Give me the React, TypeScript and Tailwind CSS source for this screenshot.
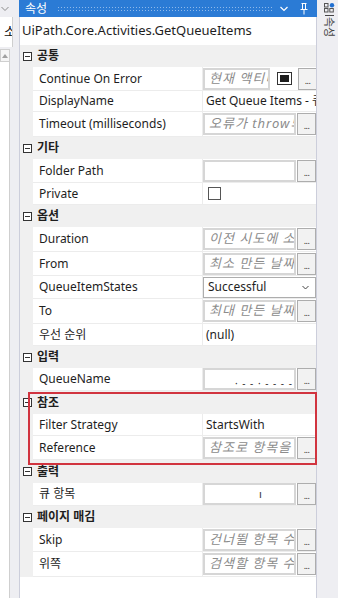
import React from 'react';

const FONT = "font-['Noto_Sans','Noto_Sans_CJK_KR',sans-serif]";

function Toggle() {
  return (
    <div className="w-[9px] h-[9px] border border-[#333] bg-white flex items-center justify-center">
      <div className="w-[5px] h-px bg-[#333]" />
    </div>
  );
}

function Category({ label, h = 22 }: { label: string; h?: number }) {
  return (
    <div className="flex items-center bg-[#f0f0f0]" style={{ height: h }}>
      <div className="ml-[3px]">
        <Toggle />
      </div>
      <span className="ml-[5px] text-[12px] font-bold text-[#1e1e1e]">{label}</span>
    </div>
  );
}

function DotsButton() {
  return (
    <div className="w-[19px] h-[22px] ml-px shrink-0 border border-[#adadad] bg-[#f2f2f2] flex items-end justify-center pb-[4px]">
      <span className="text-[9px] leading-none text-[#333] tracking-[-0.5px]">...</span>
    </div>
  );
}

function TextBox({ placeholder, w = 93, children }: { placeholder?: string; w?: number; children?: React.ReactNode }) {
  return (
    <div
      className="h-[22px] shrink-0 border-2 border-[#d6d6d6] bg-white flex items-center pl-[4px] overflow-hidden whitespace-nowrap"
      style={{ width: w }}
    >
      {placeholder ? (
        <span className="min-w-0 overflow-hidden whitespace-nowrap italic text-[13px] tracking-[1px] text-[#8c8c8c]">
          {placeholder}
        </span>
      ) : (
        children
      )}
    </div>
  );
}

function Row({ name, h, children }: { name: string; h: number; children?: React.ReactNode }) {
  return (
    <div className="flex bg-[#f0f0f0]" style={{ height: h }}>
      <div className="w-[13px] shrink-0" />
      <div className="flex flex-1 min-w-0 bg-white border-b border-[#ececec]">
        <div className="w-[170px] shrink-0 border-r border-[#ececec] flex items-center pl-[6px] text-[12px] text-[#1e1e1e] whitespace-nowrap overflow-hidden">
          {name}
        </div>
        <div className="flex-1 min-w-0 flex items-center overflow-hidden whitespace-nowrap text-[12px] text-[#1e1e1e]">
          {children}
        </div>
      </div>
    </div>
  );
}

function Pin() {
  return (
    <svg width="8" height="12" viewBox="0 0 8 12" fill="none" stroke="white" strokeWidth="1">
      <path d="M1.5 0.5h5M2.5 0.5v6M5.5 0.5v6M0.5 6.5h7M4 6.5v5" />
    </svg>
  );
}

export default function App() {
  return (
    <div className={`w-[338px] h-[598px] flex bg-[#eeeef2] overflow-hidden relative ${FONT}`}>
      {/* 왼쪽 패널 조각 */}
      <div className="w-[19px] shrink-0 flex flex-col">
        <div className="h-[17px] flex items-center pl-[1px]">
          <svg width="8" height="6" viewBox="0 0 8 6" fill="none" stroke="#8a8a8a" strokeWidth="1">
            <path d="M0.5 1l3.5 3.5 3.5-3.5" />
          </svg>
        </div>
        <div className="w-[13px] h-[30px] bg-white border-r border-[#cfcfcf] flex items-center justify-end overflow-hidden">
          <span className="text-[13px] text-[#111] -mr-[4px]">소</span>
        </div>
        <div className="flex-1 flex flex-col w-[10px] mt-[2px]">
          <div className="h-[13px] border border-[#cfcfcf] bg-[#f5f5f5] flex items-center justify-center">
            <svg width="6" height="4" viewBox="0 0 6 4"><path d="M0 4L3 0l3 4z" fill="#a0a0a0" /></svg>
          </div>
          <div className="flex-1 bg-white border-r border-[#cfcfcf]" />
        </div>
      </div>

      {/* 속성 패널 */}
      <div className="w-[298px] shrink-0 flex flex-col">
        <div className="h-[17px] bg-[#2b7bd5] flex items-center px-[6px]">
          <span className="text-[12px] text-white leading-none">속성</span>
          <div className="flex-1 h-[5px] ml-[10px] mr-[8px] bg-[radial-gradient(circle,#8fb9ea_0.6px,transparent_0.8px)] bg-[length:3px_3px]" />
          <svg width="8" height="6" viewBox="0 0 8 6" fill="none" stroke="white" strokeWidth="1.2" className="mr-[12px]">
            <path d="M0.5 1l3.5 3.5 3.5-3.5" />
          </svg>
          <Pin />
          <div className="w-[3px]" />
        </div>
        <div className="flex-1 flex flex-col bg-white border-l border-r border-[#cccedb]">
          <div className="h-[28px] pt-[4px] pl-[2px] text-[13px] leading-[18px] text-[#1e1e1e]">UiPath.Core.Activities.GetQueueItems</div>

          <Category label="공통" />
          <Row name="Continue On Error" h={24}>
            <TextBox w={67} placeholder="현재 액티비티가 실패해도" />
            <div className="w-[15px] h-[13px] ml-[7px] mr-[5px] shrink-0 border border-[#333] bg-white flex items-center justify-center">
              <div className="w-[9px] h-[7px] bg-[#1e1e1e]" />
            </div>
            <DotsButton />
          </Row>
          <Row name="DisplayName" h={21}>
            <span className="pl-[3px]">Get Queue Items - 큐 항목 가져오기</span>
          </Row>
          <Row name="Timeout (milliseconds)" h={25}>
            <TextBox placeholder="오류가 throw되기 전에" />
            <DotsButton />
          </Row>

          <Category label="기타" />
          <Row name="Folder Path" h={24}>
            <TextBox />
            <DotsButton />
          </Row>
          <Row name="Private" h={22}>
            <div className="w-[13px] h-[13px] ml-[5px] border border-[#555] bg-white" />
          </Row>

          <Category label="옵션" />
          <Row name="Duration" h={25}>
            <TextBox placeholder="이전 시도에 소요된 시간" />
            <DotsButton />
          </Row>
          <Row name="From" h={24}>
            <TextBox placeholder="최소 만든 날짜" />
            <DotsButton />
          </Row>
          <Row name="QueueItemStates" h={23}>
            <div className="w-[113px] h-[21px] border border-[#adadad] bg-white flex items-center pl-[4px] pr-[6px]">
              <span className="flex-1 text-[12px]">Successful</span>
              <svg width="7" height="5" viewBox="0 0 7 5" fill="none" stroke="#444" strokeWidth="1">
                <path d="M0.5 1l3 3 3-3" />
              </svg>
            </div>
          </Row>
          <Row name="To" h={25}>
            <TextBox placeholder="최대 만든 날짜" />
            <DotsButton />
          </Row>
          <Row name="우선 순위" h={22}>
            <span className="pl-[3px]">(null)</span>
          </Row>

          <Category label="입력" />
          <Row name="QueueName" h={23}>
            <TextBox>
              <span className="text-[10px] text-[#333] tracking-[1px] pl-[26px] mt-[8px]">· - - · - - - - _ . ,  ˙</span>
            </TextBox>
            <DotsButton />
          </Row>

          <Category label="참조" h={23} />
          <Row name="Filter Strategy" h={22}>
            <span className="pl-[3px]">StartsWith</span>
          </Row>
          <Row name="Reference" h={24}>
            <TextBox placeholder="참조로 항목을 필터링" />
            <DotsButton />
          </Row>

          <Category label="출력" h={23} />
          <Row name="큐 항목" h={23}>
            <TextBox>
              <span className="pl-[50px] text-[11px] text-[#333]">ı</span>
            </TextBox>
            <DotsButton />
          </Row>

          <Category label="페이지 매김" />
          <Row name="Skip" h={24}>
            <TextBox placeholder="건너뛸 항목 수" />
            <DotsButton />
          </Row>
          <Row name="위쪽" h={25}>
            <TextBox placeholder="검색할 항목 수" />
            <DotsButton />
          </Row>
          <div className="flex-1 bg-white" />
        </div>
      </div>

      {/* 오른쪽 탭 */}
      <div className="w-[21px] shrink-0 flex flex-col items-center pt-[3px] pl-[3px]">
        <svg width="11" height="10" viewBox="0 0 11 10" fill="none">
          <rect x="0.5" y="0.5" width="3.5" height="3.5" stroke="#555" />
          <circle cx="8" cy="2.3" r="2.2" fill="#1f6fd1" />
          <rect x="0.5" y="5.5" width="3.5" height="3.5" stroke="#555" />
          <rect x="5.8" y="5.5" width="3.5" height="3.5" stroke="#555" />
        </svg>
        <div className="mt-[2px] w-[9px] border-t border-[#444]" />
        <span className="text-[11px] text-[#444] leading-none [writing-mode:vertical-rl] [text-orientation:sideways] mt-[1px]">속성</span>
      </div>

      {/* 강조 표시 */}
      <div className="absolute left-[28px] top-[392px] w-[289px] h-[73px] border-2 border-[#d1343f] pointer-events-none" />
    </div>
  );
}
